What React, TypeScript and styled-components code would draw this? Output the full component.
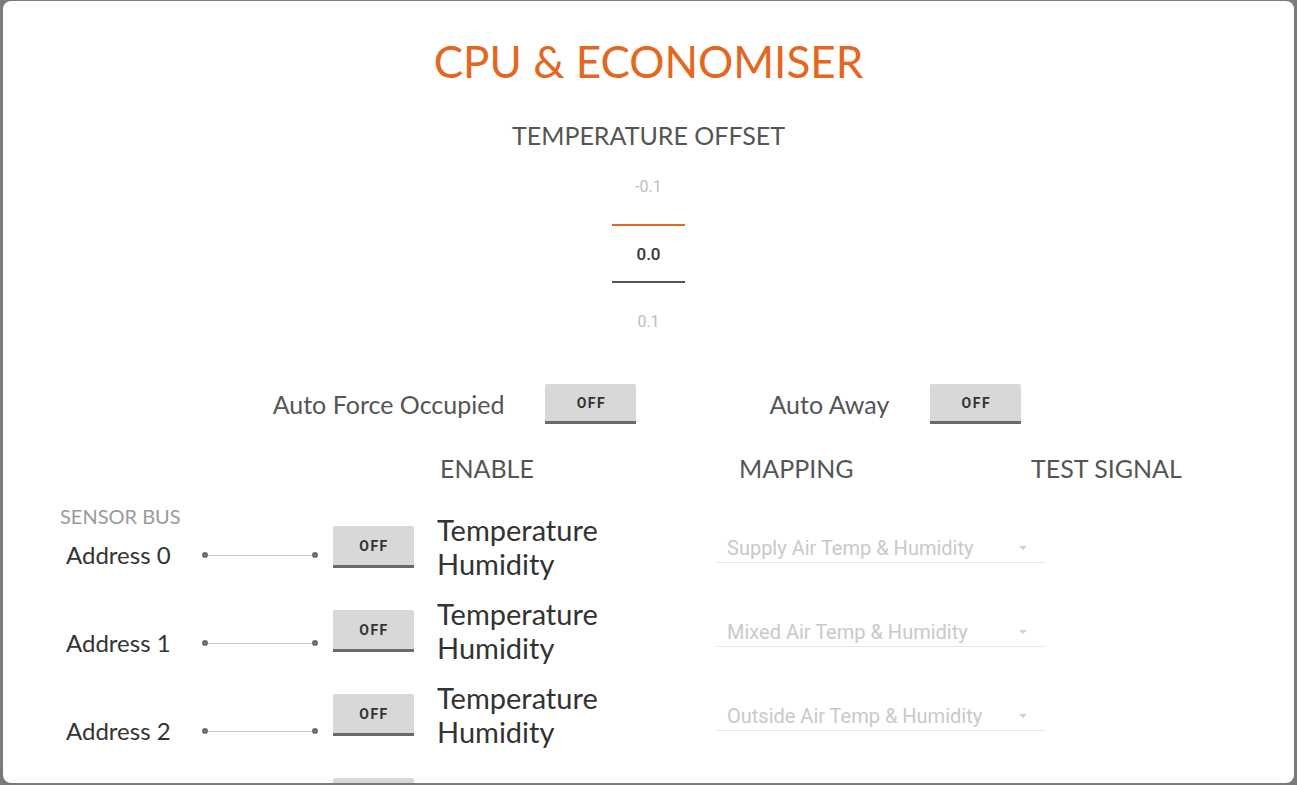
import React from 'react'
import styled, { createGlobalStyle } from 'styled-components'

const GlobalStyle = createGlobalStyle`
  html, body {
    margin: 0;
    padding: 0;
    background: #7a7a7a;
    overflow: hidden;
  }
  body {
    font-family: 'Lato', 'Liberation Sans', sans-serif;
  }
`

const sensors = [
  { address: 'Address 0', label: ['Temperature', 'Humidity'], mapping: 'Supply Air Temp & Humidity' },
  { address: 'Address 1', label: ['Temperature', 'Humidity'], mapping: 'Mixed Air Temp & Humidity' },
  { address: 'Address 2', label: ['Temperature', 'Humidity'], mapping: 'Outside Air Temp & Humidity' },
  { address: 'Address 3', label: ['Pressure'], mapping: 'Duct Static Pressure' },
]

const ToggleButton = (props: { small?: boolean }) => <OffButton $small={props.small}>OFF</OffButton>

const App = () => {
  return (
    <>
      <GlobalStyle />
      <Frame>
        <Title>CPU &amp; ECONOMISER</Title>
        <SectionTitle>TEMPERATURE OFFSET</SectionTitle>

        <Picker>
          <PickerItem>-0.1</PickerItem>
          <PickerItem $selected>0.0</PickerItem>
          <PickerItem>0.1</PickerItem>
        </Picker>

        <ToggleRow>
          <ToggleGroup>
            <ToggleLabel>Auto Force Occupied</ToggleLabel>
            <ToggleButton />
          </ToggleGroup>
          <ToggleGroup>
            <ToggleLabel>Auto Away</ToggleLabel>
            <ToggleButton />
          </ToggleGroup>
        </ToggleRow>

        <HeaderRow>
          <ColumnHeader $width={299}>ENABLE</ColumnHeader>
          <ColumnHeader $width={292}>MAPPING</ColumnHeader>
          <ColumnHeader>TEST SIGNAL</ColumnHeader>
        </HeaderRow>

        <SensorSection>
          <AddressColumn>
            <BusLabel>SENSOR BUS</BusLabel>
            {sensors.map((s) => (
              <AddressRow key={s.address}>
                <AddressLabel>{s.address}</AddressLabel>
                <Connector>
                  <Dot />
                  <Wire />
                  <Dot />
                </Connector>
              </AddressRow>
            ))}
          </AddressColumn>

          <EnableColumn>
            {sensors.map((s) => (
              <EnableRow key={s.address}>
                <ToggleButton small />
                <SensorLabel>
                  {s.label.map((line) => (
                    <div key={line}>{line}</div>
                  ))}
                </SensorLabel>
                <Dropdown>
                  <span>{s.mapping}</span>
                  <Caret />
                </Dropdown>
              </EnableRow>
            ))}
          </EnableColumn>
        </SensorSection>
      </Frame>
    </>
  )
}

export default App

const Frame = styled.div`
  margin: 1px 3px 2px 3px;
  height: 782px;
  background: #ffffff;
  border-radius: 8px;
  overflow: hidden;
  box-sizing: border-box;
  padding-top: 33px;
  display: flex;
  flex-direction: column;
  align-items: stretch;
`

const Title = styled.h1`
  margin: 0;
  text-align: center;
  font-family: 'Lato', sans-serif;
  font-weight: 400;
  font-size: 44px;
  line-height: 54px;
  color: #e4661f;
`

const SectionTitle = styled.div`
  margin-top: 32px;
  text-align: center;
  font-size: 25px;
  line-height: 30px;
  color: #555555;
`

const Picker = styled.div`
  align-self: center;
  width: 73px;
  display: flex;
  flex-direction: column;
  margin-top: 2px;
`

const PickerItem = styled.div<{ $selected?: boolean }>`
  height: ${(p) => (p.$selected ? '55px' : '68px')};
  display: flex;
  align-items: center;
  justify-content: center;
  font-family: 'Roboto', sans-serif;
  font-size: ${(p) => (p.$selected ? '17px' : '16px')};
  font-weight: ${(p) => (p.$selected ? 500 : 400)};
  color: ${(p) => (p.$selected ? '#333333' : '#bdbdbd')};
  border-top: ${(p) => (p.$selected ? '2px solid #e4661f' : 'none')};
  border-bottom: ${(p) => (p.$selected ? '2px solid #555555' : 'none')};
  margin: ${(p) => (p.$selected ? '4px 0' : '0')};
`

const ToggleRow = styled.div`
  margin-top: 29px;
  display: flex;
  justify-content: center;
  gap: 133px;
  padding-right: 3px;
`

const ToggleGroup = styled.div`
  display: flex;
  align-items: center;
  gap: 41px;
`

const ToggleLabel = styled.div`
  font-size: 25px;
  line-height: 30px;
  color: #555555;
`

const OffButton = styled.button<{ $small?: boolean }>`
  width: ${(p) => (p.$small ? '81px' : '91px')};
  height: ${(p) => (p.$small ? '42px' : '40px')};
  box-sizing: border-box;
  border: none;
  border-bottom: 3px solid #6a6a6a;
  border-radius: 2px 2px 0 0;
  background: #d8d8d8;
  font-family: 'Roboto', sans-serif;
  font-weight: 700;
  font-size: 14px;
  letter-spacing: 1.5px;
  color: #333333;
  padding: 0 0 0 1px;
  cursor: pointer;
  flex-shrink: 0;
`

const HeaderRow = styled.div`
  margin-top: 29px;
  display: flex;
  padding-left: 437px;
`

const ColumnHeader = styled.div<{ $width?: number }>`
  width: ${(p) => (p.$width ? `${p.$width}px` : 'auto')};
  font-size: 25px;
  line-height: 30px;
  color: #555555;
`

const SensorSection = styled.div`
  margin-top: 21px;
  display: flex;
  padding-left: 57px;
`

const AddressColumn = styled.div`
  width: 273px;
  display: flex;
  flex-direction: column;
`

const BusLabel = styled.div`
  font-size: 20px;
  line-height: 24px;
  color: #9a9a9a;
`

const AddressRow = styled.div`
  height: 88px;
  display: flex;
  align-items: flex-start;
  padding-top: 13px;
  padding-left: 6px;
  box-sizing: border-box;
`

const AddressLabel = styled.div`
  width: 136px;
  font-size: 24px;
  line-height: 28px;
  color: #333333;
`

const Connector = styled.div`
  width: 116px;
  height: 28px;
  display: flex;
  align-items: center;
`

const Dot = styled.div`
  width: 6px;
  height: 6px;
  border-radius: 50%;
  background: #6f6f6f;
  flex-shrink: 0;
`

const Wire = styled.div`
  flex: 1;
  height: 1px;
  background: #c8c8c8;
`

const EnableColumn = styled.div`
  display: flex;
  flex-direction: column;
  margin-top: 1px;
`

const EnableRow = styled.div`
  height: 84px;
  display: flex;
  align-items: center;
`

const SensorLabel = styled.div`
  width: 303px;
  padding-left: 23px;
  box-sizing: border-box;
  font-size: 29px;
  line-height: 34px;
  color: #333333;
`

const Dropdown = styled.div`
  width: 328px;
  height: 30px;
  box-sizing: border-box;
  padding: 0 18px 0 10px;
  margin-top: 2px;
  display: flex;
  align-items: center;
  justify-content: space-between;
  border-bottom: 1px solid #e6e6e6;
  font-family: 'Roboto', sans-serif;
  font-size: 20px;
  color: #c9c9c9;
`

const Caret = styled.span`
  width: 0;
  height: 0;
  border-left: 4px solid transparent;
  border-right: 4px solid transparent;
  border-top: 4px solid #cfcfcf;
`
